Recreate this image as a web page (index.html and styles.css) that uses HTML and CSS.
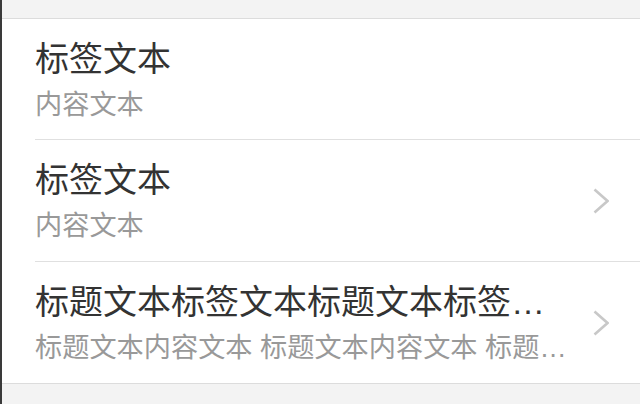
FILE: index.html
```html
<!DOCTYPE html>
<html lang="zh-CN">
<head>
<meta charset="utf-8">
<title>列表</title>
<link rel="stylesheet" href="styles.css">
</head>
<body>
<div class="page">
  <ul class="cells">
    <li class="cell">
      <div class="cell-body">
        <div class="cell-title">标签文本</div>
        <div class="cell-desc">内容文本</div>
      </div>
    </li>
    <li class="cell">
      <div class="cell-body">
        <div class="cell-title">标签文本</div>
        <div class="cell-desc">内容文本</div>
      </div>
      <svg class="cell-arrow" viewBox="0 0 16 26" aria-hidden="true">
        <path d="M1.5 1.5 L14.5 13 L1.5 24.5" />
      </svg>
    </li>
    <li class="cell">
      <div class="cell-body">
        <div class="cell-title">标题文本标签文本标题文本标签文本标题文本</div>
        <div class="cell-desc">标题文本内容文本 标题文本内容文本 标题文本内容文本</div>
      </div>
      <svg class="cell-arrow" viewBox="0 0 16 26" aria-hidden="true">
        <path d="M1.5 1.5 L14.5 13 L1.5 24.5" />
      </svg>
    </li>
  </ul>
</div>
</body>
</html>
```

FILE: styles.css
```css
html, body {
  margin: 0;
  padding: 0;
  height: 100%;
}

body {
  background: #f3f3f3;
  /* Latin face first so the truncation ellipsis is wide, on the baseline */
  font-family: "Liberation Sans", "Noto Sans CJK SC", sans-serif;
  border-left: 2px solid #3a3a3a;
  box-sizing: border-box;
}

.page {
  padding-top: 18px;
}

.cells {
  list-style: none;
  margin: 0;
  padding: 0 0 0 33px;
  background: #fff;
  border-top: 1px solid #dcdcdc;
  border-bottom: 1px solid #dcdcdc;
}

.cell {
  display: flex;
  align-items: center;
  height: 122px;
  padding-right: 31px;
  box-sizing: border-box;
  border-top: 1px solid #e0e0e0;
}

.cell:first-child {
  border-top: none;
  height: 120px;
}

.cell-body {
  flex: 1;
  min-width: 0;
  padding-right: 22px;
}

.cell-title,
.cell-desc {
  white-space: nowrap;
  overflow: hidden;
  text-overflow: ellipsis;
}

.cell-title {
  font-size: 34px;
  line-height: 50px;
  color: #333;
}

.cell-desc {
  margin-top: 1px;
  font-size: 27.2px;
  line-height: 40px;
  color: #999;
}

.cell-arrow {
  flex: none;
  width: 16px;
  height: 26px;
  fill: none;
  stroke: #c8c8c8;
  stroke-width: 2.6;
}
```
